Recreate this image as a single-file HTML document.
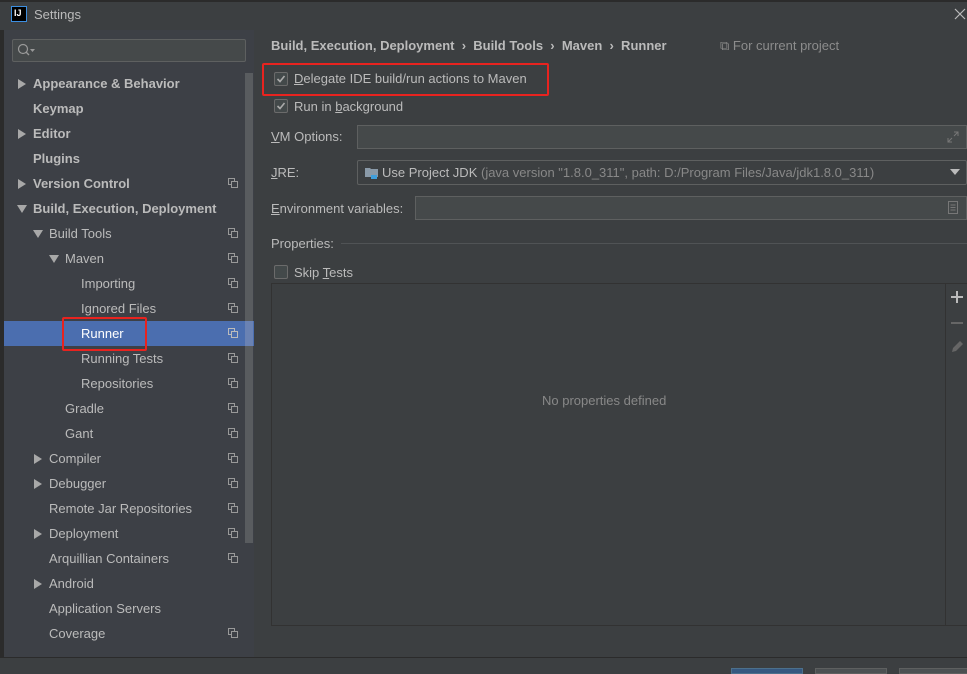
<!DOCTYPE html>
<html><head><meta charset="utf-8"><style>
*{margin:0;padding:0;box-sizing:border-box}
body{width:967px;height:673px;overflow:hidden;background:#3c3f41;font-family:"Liberation Sans",sans-serif;font-size:13px;color:#bbbbbb;position:relative}
.abs{position:absolute}
.row{position:absolute;left:4px;width:241px;height:25px;line-height:25px;white-space:nowrap}
.tri{position:absolute;width:0;height:0;border-top:5px solid transparent;border-bottom:5px solid transparent;border-left:8px solid #a8a8a8;top:8px}
.trid{position:absolute;width:0;height:0;border-left:5px solid transparent;border-right:5px solid transparent;border-top:8px solid #a8a8a8;top:9px}
.ic{position:absolute;left:224px;top:7px;width:10px;height:10px}
.b{font-weight:bold}
.cb{position:absolute;width:14px;height:14px;border:1px solid #6b6b6b;background:#43494a;border-radius:2px}
.inp{position:absolute;background:#45494a;border:1px solid #5e6060}
u{text-decoration:underline}
</style></head><body>
<div class="abs" style="left:0;top:0;width:967px;height:32px;background:#3c3f41"></div>
<div class="abs" style="left:0;top:0;width:967px;height:2px;background:#2b2b2b"></div>
<div class="abs" style="left:11px;top:6px;width:16px;height:16px;border:1px solid #3d8fe0;background:#000;color:#fff;font-size:9px;font-weight:bold;line-height:12px;padding-left:2px">IJ</div>
<div class="abs" style="left:34px;top:7px;font-size:13px;color:#bbb">Settings</div>
<svg class="abs" style="left:954px;top:8px" width="12" height="12"><path d="M1 1L11 11M11 1L1 11" stroke="#bbb" stroke-width="1.2"/></svg>
<div class="abs" style="left:0;top:30px;width:4px;height:643px;background:#2b2b2b"></div>
<div class="abs" style="left:4px;top:30px;width:250px;height:627px;background:#3d4046"></div>
<div class="abs" style="left:245px;top:73px;width:8px;height:470px;background:#595c5f"></div>
<div class="abs" style="left:12px;top:39px;width:234px;height:23px;border:1px solid #5e6060;background:#45494a;border-radius:2px"></div>
<svg class="abs" style="left:17px;top:43px" width="20" height="14"><circle cx="6" cy="6" r="4.5" stroke="#999" fill="none" stroke-width="1.2"/><path d="M9 9L12 12" stroke="#999" stroke-width="1.3"/><path d="M13 6h5l-2.5 3z" fill="#999"/></svg>
<div class="abs" style="left:4px;top:321px;width:250px;height:25px;background:#4b6eaf"></div>
<div class="abs" style="left:245px;top:321px;width:8px;height:25px;background:#6a82b3"></div>

<div class="row b" style="top:71px"><span class="tri" style="left:14px"></span><span style="position:absolute;left:29px">Appearance &amp; Behavior</span></div>
<div class="row b" style="top:96px"><span style="position:absolute;left:29px">Keymap</span></div>
<div class="row b" style="top:121px"><span class="tri" style="left:14px"></span><span style="position:absolute;left:29px">Editor</span></div>
<div class="row b" style="top:146px"><span style="position:absolute;left:29px">Plugins</span></div>
<div class="row b" style="top:171px"><span class="tri" style="left:14px"></span><span style="position:absolute;left:29px">Version Control</span><svg class="ic"><rect x=".5" y=".5" width="6" height="6" fill="none" stroke="#999"/><rect x="3.5" y="3.5" width="6" height="6" fill="#3d4046" stroke="#999"/></svg></div>
<div class="row b" style="top:196px"><span class="trid" style="left:13px"></span><span style="position:absolute;left:29px">Build, Execution, Deployment</span></div>
<div class="row" style="top:221px"><span class="trid" style="left:29px"></span><span style="position:absolute;left:45px">Build Tools</span><svg class="ic"><rect x=".5" y=".5" width="6" height="6" fill="none" stroke="#999"/><rect x="3.5" y="3.5" width="6" height="6" fill="#3d4046" stroke="#999"/></svg></div>
<div class="row" style="top:246px"><span class="trid" style="left:45px"></span><span style="position:absolute;left:61px">Maven</span><svg class="ic"><rect x=".5" y=".5" width="6" height="6" fill="none" stroke="#999"/><rect x="3.5" y="3.5" width="6" height="6" fill="#3d4046" stroke="#999"/></svg></div>
<div class="row" style="top:271px"><span style="position:absolute;left:77px">Importing</span><svg class="ic"><rect x=".5" y=".5" width="6" height="6" fill="none" stroke="#999"/><rect x="3.5" y="3.5" width="6" height="6" fill="#3d4046" stroke="#999"/></svg></div>
<div class="row" style="top:296px"><span style="position:absolute;left:77px">Ignored Files</span><svg class="ic"><rect x=".5" y=".5" width="6" height="6" fill="none" stroke="#999"/><rect x="3.5" y="3.5" width="6" height="6" fill="#3d4046" stroke="#999"/></svg></div>
<div class="row" style="top:321px;color:#fff"><span style="position:absolute;left:77px">Runner</span><svg class="ic"><rect x=".5" y=".5" width="6" height="6" fill="none" stroke="#bbb"/><rect x="3.5" y="3.5" width="6" height="6" fill="#4b6eaf" stroke="#bbb"/></svg></div>
<div class="row" style="top:346px"><span style="position:absolute;left:77px">Running Tests</span><svg class="ic"><rect x=".5" y=".5" width="6" height="6" fill="none" stroke="#999"/><rect x="3.5" y="3.5" width="6" height="6" fill="#3d4046" stroke="#999"/></svg></div>
<div class="row" style="top:371px"><span style="position:absolute;left:77px">Repositories</span><svg class="ic"><rect x=".5" y=".5" width="6" height="6" fill="none" stroke="#999"/><rect x="3.5" y="3.5" width="6" height="6" fill="#3d4046" stroke="#999"/></svg></div>
<div class="row" style="top:396px"><span style="position:absolute;left:61px">Gradle</span><svg class="ic"><rect x=".5" y=".5" width="6" height="6" fill="none" stroke="#999"/><rect x="3.5" y="3.5" width="6" height="6" fill="#3d4046" stroke="#999"/></svg></div>
<div class="row" style="top:421px"><span style="position:absolute;left:61px">Gant</span><svg class="ic"><rect x=".5" y=".5" width="6" height="6" fill="none" stroke="#999"/><rect x="3.5" y="3.5" width="6" height="6" fill="#3d4046" stroke="#999"/></svg></div>
<div class="row" style="top:446px"><span class="tri" style="left:30px"></span><span style="position:absolute;left:45px">Compiler</span><svg class="ic"><rect x=".5" y=".5" width="6" height="6" fill="none" stroke="#999"/><rect x="3.5" y="3.5" width="6" height="6" fill="#3d4046" stroke="#999"/></svg></div>
<div class="row" style="top:471px"><span class="tri" style="left:30px"></span><span style="position:absolute;left:45px">Debugger</span><svg class="ic"><rect x=".5" y=".5" width="6" height="6" fill="none" stroke="#999"/><rect x="3.5" y="3.5" width="6" height="6" fill="#3d4046" stroke="#999"/></svg></div>
<div class="row" style="top:496px"><span style="position:absolute;left:45px">Remote Jar Repositories</span><svg class="ic"><rect x=".5" y=".5" width="6" height="6" fill="none" stroke="#999"/><rect x="3.5" y="3.5" width="6" height="6" fill="#3d4046" stroke="#999"/></svg></div>
<div class="row" style="top:521px"><span class="tri" style="left:30px"></span><span style="position:absolute;left:45px">Deployment</span><svg class="ic"><rect x=".5" y=".5" width="6" height="6" fill="none" stroke="#999"/><rect x="3.5" y="3.5" width="6" height="6" fill="#3d4046" stroke="#999"/></svg></div>
<div class="row" style="top:546px"><span style="position:absolute;left:45px">Arquillian Containers</span><svg class="ic"><rect x=".5" y=".5" width="6" height="6" fill="none" stroke="#999"/><rect x="3.5" y="3.5" width="6" height="6" fill="#3d4046" stroke="#999"/></svg></div>
<div class="row" style="top:571px"><span class="tri" style="left:30px"></span><span style="position:absolute;left:45px">Android</span></div>
<div class="row" style="top:596px"><span style="position:absolute;left:45px">Application Servers</span></div>
<div class="row" style="top:621px"><span style="position:absolute;left:45px">Coverage</span><svg class="ic"><rect x=".5" y=".5" width="6" height="6" fill="none" stroke="#999"/><rect x="3.5" y="3.5" width="6" height="6" fill="#3d4046" stroke="#999"/></svg></div>
<div class="abs" style="left:62px;top:317px;width:85px;height:34px;border:2px solid #e8231f;border-radius:2px"></div>

<div class="abs" style="left:0;top:657px;width:967px;height:16px;background:#3c3f41;border-top:1px solid #2b2b2b"></div>
<div class="abs" style="left:731px;top:668px;width:72px;height:6px;background:#365880;border:1px solid #4c708c"></div>
<div class="abs" style="left:815px;top:668px;width:72px;height:6px;background:#4c5052;border:1px solid #5e6060"></div>
<div class="abs" style="left:899px;top:668px;width:72px;height:6px;background:#4c5052;border:1px solid #5e6060"></div>

<div class="abs b" style="left:271px;top:38px;font-size:13px;color:#bbb;white-space:nowrap">Build, Execution, Deployment &nbsp;›&nbsp; Build Tools &nbsp;›&nbsp; Maven &nbsp;›&nbsp; Runner</div>
<div class="abs" style="left:720px;top:38px;color:#8c8c8c;white-space:nowrap">⧉ For current project</div>

<div class="cb" style="left:274px;top:72px"></div><svg class="abs" style="left:276px;top:74px" width="10" height="10"><path d="M1.5 5L4 7.5L8.5 2" stroke="#aaa" stroke-width="1.6" fill="none"/></svg>
<div class="abs" style="left:294px;top:71px"><u>D</u>elegate IDE build/run actions to Maven</div>
<div class="abs" style="left:262px;top:63px;width:287px;height:33px;border:2px solid #e8231f;border-radius:2px"></div>
<div class="cb" style="left:274px;top:99px"></div><svg class="abs" style="left:276px;top:101px" width="10" height="10"><path d="M1.5 5L4 7.5L8.5 2" stroke="#aaa" stroke-width="1.6" fill="none"/></svg>
<div class="abs" style="left:294px;top:99px">Run in <u>b</u>ackground</div>

<div class="abs" style="left:271px;top:129px"><u>V</u>M Options:</div>
<div class="inp" style="left:357px;top:125px;width:610px;height:24px"></div>
<svg class="abs" style="left:946px;top:130px" width="14" height="14"><path d="M8 2h4v4M12 2L8 6M2 8v4h4M2 12l4-4" stroke="#777" fill="none"/></svg>
<div class="abs" style="left:271px;top:165px"><u>J</u>RE:</div>
<div class="abs" style="left:357px;top:160px;width:610px;height:25px;border:1px solid #5e6060;background:#3c3f41;border-radius:2px"></div>
<svg class="abs" style="left:364px;top:165px" width="16" height="16"><path d="M1 3h5l1 1h7v8H1z" fill="#8a9aa8"/><rect x="7" y="10" width="6" height="4" fill="#3f9fdc"/></svg>
<div class="abs" style="left:382px;top:165px;white-space:nowrap;color:#bbb">Use Project JDK <span style="color:#888">(java version "1.8.0_311", path: D:/Program Files/Java/jdk1.8.0_311)</span></div>
<svg class="abs" style="left:950px;top:169px" width="10" height="7"><path d="M0 0h10L5 6z" fill="#bbb"/></svg>
<div class="abs" style="left:271px;top:201px"><u>E</u>nvironment variables:</div>
<div class="inp" style="left:415px;top:196px;width:552px;height:24px"></div>
<svg class="abs" style="left:947px;top:200px" width="12" height="16"><rect x="1.5" y="1.5" width="9" height="12" fill="none" stroke="#777"/><path d="M3.5 5h5M3.5 7.5h5M3.5 10h5" stroke="#777"/></svg>
<div class="abs" style="left:271px;top:236px">Properties:</div>
<div class="abs" style="left:341px;top:243px;width:626px;height:1px;background:#505355"></div>
<div class="cb" style="left:274px;top:265px"></div>
<div class="abs" style="left:294px;top:265px">Skip <u>T</u>ests</div>
<div class="abs" style="left:271px;top:283px;width:700px;height:343px;border:1px solid #323232"></div>
<div class="abs" style="left:945px;top:284px;width:1px;height:341px;background:#323232"></div>
<div class="abs" style="left:542px;top:393px;color:#888">No properties defined</div>
<svg class="abs" style="left:950px;top:290px" width="14" height="14"><path d="M7 1v12M1 7h12" stroke="#bbb" stroke-width="2"/></svg>
<svg class="abs" style="left:950px;top:316px" width="14" height="14"><path d="M1 7h12" stroke="#666" stroke-width="2"/></svg>
<svg class="abs" style="left:950px;top:340px" width="14" height="14"><path d="M2 12l1-4 7-7 3 3-7 7z" fill="#666"/></svg>
</body></html>
